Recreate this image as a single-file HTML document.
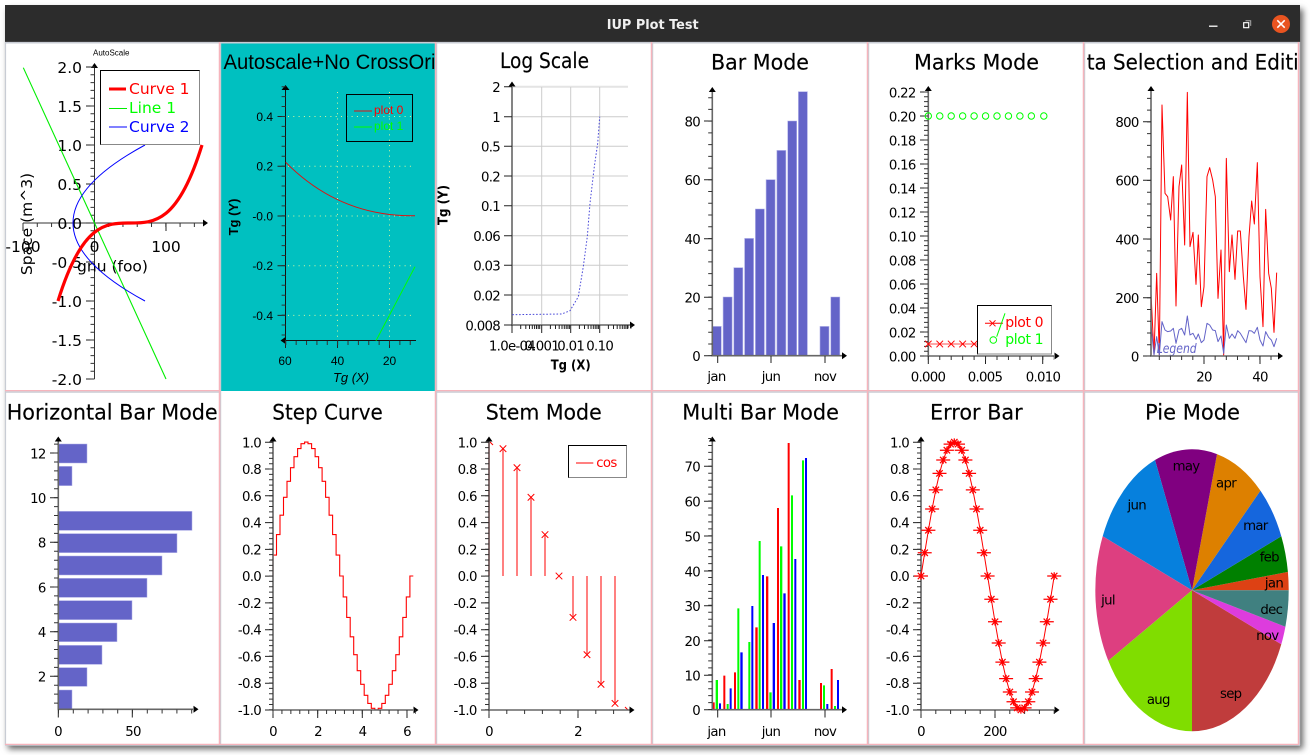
<!DOCTYPE html>
<html><head><meta charset="utf-8"><title>IUP Plot Test</title>
<style>
html,body{margin:0;padding:0;background:#fff;width:1310px;height:755px;overflow:hidden}
#w{position:absolute;left:5px;top:5px;width:1295px;height:740px;background:#fff;box-shadow:3px 4px 6px rgba(0,0,0,.6)}
svg{position:absolute;left:0;top:0}
text{font-family:"DejaVu Sans","Liberation Sans",sans-serif;fill:#000}
.l text,text.l{font-size:13.3px;letter-spacing:-.7px}
.e{text-anchor:end}.m{text-anchor:middle}
.ti{font-size:21.5px;fill:#000;stroke:#000;stroke-width:.15px}
.big text{font-size:15.5px}
.lib text,text.lib{font-family:"Liberation Sans",sans-serif;font-size:12px}
.ax{stroke:#666;stroke-width:1.6;fill:none}
.tk{stroke:#222;stroke-width:1;fill:none}
.mn{stroke:#333;stroke-width:4;fill:none}
.ar{fill:#000;stroke:none}
</style></head><body>
<div id="w"></div>
<svg width="1310" height="755" viewBox="0 0 1310 755" xmlns="http://www.w3.org/2000/svg">
<defs>
<marker id="mx" markerUnits="userSpaceOnUse" markerWidth="10" markerHeight="10" refX="5" refY="5" overflow="visible"><path d="M1.7 1.7L8.3 8.3M8.3 1.7L1.7 8.3" stroke="#f00" fill="none"/></marker>
<marker id="mo" markerUnits="userSpaceOnUse" markerWidth="10" markerHeight="10" refX="5" refY="5" overflow="visible"><circle cx="5" cy="5" r="3.2" stroke="#0f0" fill="none"/></marker>
<marker id="ms" markerUnits="userSpaceOnUse" markerWidth="16" markerHeight="10" refX="8" refY="5" overflow="visible"><path d="M1 5H15M8 1.3V8.7M4.8 1.8L11.2 8.2M11.2 1.8L4.8 8.2" stroke="#f00" stroke-width="1.25" fill="none"/></marker>
<path id="dec" d="M8.7 325v4M13.8 325v4M17.5 325v4M20.3 325v4M22.6 325v4M24.5 325v4M26.2 325v4M27.7 325v4" stroke="#222" fill="none"/>
<path id="ym" d="M0 442.3h8M0 469h8M0 495.8h8M0 522.6h8M0 549.4h8M0 576.1h8M0 602.9h8M0 629.7h8M0 656.4h8M0 683.2h8M0 710h8" stroke="#222" fill="none"/>
</defs>

<!-- title bar -->
<rect x="5" y="5" width="1295" height="37" fill="#2c2c2c"/>
<text x="606.7" y="29" font-size="13" font-weight="bold" textLength="92" lengthAdjust="spacingAndGlyphs" style="fill:#f0f0f0">IUP Plot Test</text>
<path d="M1209 26.2h8.5" stroke="#fff" stroke-width="1.3"/>
<path d="M1243.7 22.7h5v5h-5z" stroke="#fff" stroke-width="1.2" fill="none"/>
<path d="M1245.5 20.7h5.2v5.2" stroke="#aaa" stroke-width="1" fill="none"/>
<circle cx="1281" cy="24" r="9" fill="#e95420"/>
<path d="M1277.3 20.3l7.4 7.4M1284.7 20.3l-7.4 7.4" stroke="#fff" stroke-width="1.5"/>

<!-- cyan cell -->
<rect x="221" y="42" width="214" height="349" fill="#00c0c0"/>

<!-- Plot 1 -->
<text x="93" y="55.5" font-size="8" style="font-family:'Liberation Sans',sans-serif" fill="#222">AutoScale</text>
<path class="ax" style="stroke:#333;stroke-width:1" d="M94.5 68V379M23 223H204"/>
<path class="ar" d="M94.5 63l-3.5 5h7z M208 223l-5 -3.5v7z"/>
<path class="tk" d="M86 67h8M86 106h8M86 145h8M86 184h8M86 223h8M86 262h8M86 301h8M86 340h8M86 379h8M23 223v8M94.5 223v8M166 223v8"/>
<path class="mn" style="stroke-width:4" stroke-dasharray="1 6.8" d="M92.5 66.5V380"/>
<path class="mn" stroke-dasharray="1 13.28" d="M22.5 225H205"/>
<g class="big">
<text class="e" x="82" y="73">2.0</text><text class="e" x="82" y="112">1.5</text><text class="e" x="82" y="151">1.0</text><text class="e" x="82" y="190">0.5</text><text class="e" x="82" y="229">0.0</text><text class="e" x="82" y="268">-0.5</text><text class="e" x="82" y="307">-1.0</text><text class="e" x="82" y="346">-1.5</text><text class="e" x="82" y="385">-2.0</text>
<text class="m" x="23" y="252">-100</text><text class="m" x="94.5" y="252">0</text><text class="m" x="166" y="252">100</text>
<text class="m" x="112.5" y="271.5">gnu (foo)</text>
<text class="m" transform="rotate(-90 32 224)" x="32" y="224">Space (m^3)</text>
</g>
<path d="M23.3 67.7L166 379" stroke="#0e0" fill="none" stroke-width="1.1"/>
<path d="M145 145Q1 223 145 301" stroke="#00f" fill="none" stroke-width="1"/>
<path d="M58 301C106 145 154 301 202 145" stroke="#f00" fill="none" stroke-width="3.2"/>
<rect x="100.5" y="70.5" width="99" height="74" fill="#fff" stroke="#000"/>
<path d="M199.5 70.5V144.5H100.5" stroke="#888" fill="none"/>
<path d="M109 89h17" stroke="#f00" stroke-width="3" /><path d="M109 108.5h18" stroke="#0e0"/><path d="M109 127h18" stroke="#00f"/>
<g class="big"><text x="129" y="94" style="fill:#f00">Curve 1</text><text x="129" y="113" style="fill:#0f0">Line 1</text><text x="129" y="132" style="fill:#00f">Curve 2</text></g>

<!-- Plot 2 -->
<text x="223.5" y="69" font-size="21" textLength="212" lengthAdjust="spacingAndGlyphs" style="font-family:'Liberation Sans',sans-serif">Autoscale+No CrossOri</text>
<path d="M288 116.5H415M288 166.2H415M288 216H415M288 265.7H415M288 315.4H415M337.5 92V340M389.5 92V340" stroke="#d8f5a0" stroke-dasharray="1 4.3" fill="none"/>
<path class="ax" style="stroke:#111;stroke-width:1" d="M285.5 90V340.5H416"/>
<path class="ar" d="M285.5 85l-4 5h8z M280.5 340.5l5 -3.5v7z"/>
<path class="tk" d="M277.5 116.5h8M277.5 166.2h8M277.5 216h8M277.5 265.7h8M277.5 315.4h8M285.5 340v8M337.5 340v8M389.5 340v8"/>
<path class="mn" stroke-dasharray="1 8.93" d="M283.6 86.2V340"/>
<path class="mn" stroke-dasharray="1 9.37" d="M285.3 343H415"/>
<g class="lib">
<text class="e" x="273" y="121">0.4</text><text class="e" x="273" y="170.7">0.2</text><text class="e" x="273" y="220.5">-0.0</text><text class="e" x="273" y="270.2">-0.2</text><text class="e" x="273" y="319.9">-0.4</text>
<text class="m" x="285" y="365">60</text><text class="m" x="337.5" y="365">40</text><text class="m" x="389.5" y="365">20</text>
<text class="m" x="351" y="382" font-style="italic" style="font-size:13px;font-style:italic">Tg (X)</text>
<text class="m" transform="rotate(-90 238 217)" x="238" y="217" style="font-size:13px;font-weight:bold">Tg (Y)</text>
</g>
<path d="M285.7 162.3Q340 217 415 215.7" stroke="#e01010" fill="none" stroke-width="1"/>
<path d="M376 340.7L415 266.7" stroke="#0f0" fill="none"/>
<rect x="346.5" y="94.5" width="66" height="47" fill="none" stroke="#000"/>
<path d="M354 111h18" stroke="#e01010"/><path d="M354 127h18" stroke="#0f0"/>
<g class="lib"><text x="374" y="114" style="fill:#f00">plot 0</text><text x="374" y="130" style="fill:#0f0">plot 1</text></g>

<!-- Plot 3 log -->
<text class="ti" x="500" y="68" textLength="89" lengthAdjust="spacingAndGlyphs">Log Scale</text>
<path d="M512 86.7H628" stroke="#e4e4e4" stroke-width="2"/>
<path d="M512 116.7H628M512 146.3H628M512 176H628M512 205.7H628M512 235.7H628M512 265.3H628M512 295H628M541.7 87V325M570.7 87V325M599.7 87V325" stroke="#ccc" fill="none"/>
<path class="ax" d="M512 87V325H630"/>
<path class="ar" d="M512 81.5l-3.5 5h7z M635 325l-5 -3.5v7z"/>
<path class="tk" d="M504 86.7h8M504 116.7h8M504 146.3h8M504 176h8M504 205.7h8M504 235.7h8M504 265.3h8M504 295h8M504 325h8M512 325v8M541.7 325v8M570.7 325v8M599.7 325v8"/>
<use href="#dec" x="512"/><use href="#dec" x="541.7"/><use href="#dec" x="570.7"/><use href="#dec" x="599.7"/>
<path d="M628 325v3.5M631 325v3.5" stroke="#222"/>
<g class="l">
<text class="e" x="500" y="92">2</text><text class="e" x="500" y="122">1</text><text class="e" x="500" y="151.6">0.5</text><text class="e" x="500" y="181.3">0.2</text><text class="e" x="500" y="211">0.1</text><text class="e" x="500" y="241">0.06</text><text class="e" x="500" y="270.6">0.03</text><text class="e" x="500" y="300.3">0.02</text><text class="e" x="500" y="330.3">0.008</text>
<text class="m" x="512" y="350.7">1.0e-04</text><text class="m" x="541.7" y="350.7">0.001</text><text class="m" x="570.7" y="350.7">0.01</text><text class="m" x="599.7" y="350.7">0.10</text>
</g>
<text x="550.7" y="369.3" font-size="13" font-weight="bold" textLength="40" lengthAdjust="spacingAndGlyphs">Tg (X)</text>
<text transform="rotate(-90 447.5 205)" class="m" x="447.5" y="205" font-size="13" font-weight="bold" textLength="40" lengthAdjust="spacingAndGlyphs">Tg (Y)</text>
<polyline points="512.3,314.7 561.7,314 570,310.7 578.3,296.7 583.3,266.7 587.3,236.7 590,203.3 594.3,166.7 597.7,143.3 599.7,116.7" fill="none" stroke="#4848d8" stroke-width="1" stroke-dasharray="1.6 1.8"/>

<!-- Plot 4 bar -->
<text class="ti" x="711" y="69.7" textLength="98" lengthAdjust="spacingAndGlyphs">Bar Mode</text>
<path fill="#6464c8" stroke="#b0b0e8" stroke-width=".6" d="M712.3 355.7V326.4h9V355.7zM723.1 355.7V297h9V355.7zM733.8 355.7V267.7h9V355.7zM744.6 355.7V238.4h9V355.7zM755.4 355.7V209h9V355.7zM766.1 355.7V179.7h9V355.7zM776.9 355.7V150.4h9V355.7zM787.7 355.7V121h9V355.7zM798.4 355.7V91.7h9V355.7zM820 355.7V326.4h9V355.7zM830.8 355.7V297h9V355.7z"/>
<path class="ax" d="M712.3 92V355.7H842"/>
<path class="ar" d="M712.3 87l-3.5 5h7z M847 355.7l-5 -3.5v7z"/>
<path class="tk" d="M704 121h8M704 179.7h8M704 238.7h8M704 297.3h8M704 355.7h8M717.7 356v7M771 356v7M825 356v7"/>
<path class="mn" stroke-dasharray="1 10.73" d="M710.2 97.2V356"/>
<g class="l">
<text class="e" x="700" y="126.3">80</text><text class="e" x="700" y="185">60</text><text class="e" x="700" y="244">40</text><text class="e" x="700" y="302.6">20</text><text class="e" x="700" y="361">0</text>
<text class="m" x="716.5" y="381">jan</text><text class="m" x="771" y="381">jun</text><text class="m" x="825" y="381">nov</text>
</g>

<!-- Plot 5 marks -->
<text class="ti" x="914" y="69.5" textLength="125" lengthAdjust="spacingAndGlyphs">Marks Mode</text>
<path class="ax" d="M928.3 91V356H1054"/>
<path class="ar" d="M928.3 86l-3.5 5h7z M1059.5 356l-5 -3.5v7z"/>
<path class="tk" d="M920 92h8M920 116h8M920 140h8M920 164h8M920 188h8M920 212h8M920 236h8M920 260h8M920 284h8M920 308h8M920 332h8M920 356h8M928.3 356v8M985.5 356v8M1042.7 356v8"/>
<path class="mn" stroke-dasharray="1 3.8" d="M926 91.5V356.5"/>
<path class="mn" stroke-dasharray="1 10.45" d="M927.8 358H1054"/>
<g class="l">
<text class="e" x="915.7" y="97.3">0.22</text><text class="e" x="915.7" y="121.3">0.20</text><text class="e" x="915.7" y="145.3">0.18</text><text class="e" x="915.7" y="169.3">0.16</text><text class="e" x="915.7" y="193.3">0.14</text><text class="e" x="915.7" y="217.3">0.12</text><text class="e" x="915.7" y="241.3">0.10</text><text class="e" x="915.7" y="265.3">0.08</text><text class="e" x="915.7" y="289.3">0.06</text><text class="e" x="915.7" y="313.3">0.04</text><text class="e" x="915.7" y="337.3">0.02</text><text class="e" x="915.7" y="361.3">0.00</text>
<text class="m" x="928" y="381.5">0.000</text><text class="m" x="985" y="381.5">0.005</text><text class="m" x="1043" y="381.5">0.010</text>
</g>
<polyline points="928.3,116 939.75,116 951.2,116 962.65,116 974.1,116 985.55,116 997,116 1008.45,116 1019.9,116 1031.35,116 1043.8,116" fill="none" stroke="none" marker-start="url(#mo)" marker-mid="url(#mo)" marker-end="url(#mo)"/>
<polyline points="928.3,344 939.75,344 951.2,344 962.65,344 974.1,344 985.55,344" fill="none" stroke="#ff5050" marker-start="url(#mx)" marker-mid="url(#mx)" marker-end="url(#mx)"/>
<rect x="977.5" y="305.5" width="74" height="48.5" fill="#fff" stroke="#000"/>
<path d="M1051.5 305.5V354H977.5" stroke="#888" fill="none"/>
<path d="M985 323.3H1003" stroke="#f00"/><path d="M989.5 320.3l6 6M995.5 320.3l-6 6" stroke="#f00"/>
<path d="M1005 313.3L996.7 336.7" stroke="#0f0"/><circle cx="993.3" cy="340" r="3.3" fill="none" stroke="#0f0"/>
<text x="1005.3" y="327" font-size="14" letter-spacing="-.4" style="fill:#f00">plot 0</text>
<text x="1005.3" y="344" font-size="14" letter-spacing="-.4" style="fill:#0f0">plot 1</text>

<!-- Plot 6 -->
<text class="ti" x="1086.7" y="69.5" textLength="212" lengthAdjust="spacingAndGlyphs">ta Selection and Editi</text>
<g transform="translate(870 0) scale(.33333)" fill="none" stroke-width="3" stroke-linejoin="round">
<polyline stroke="#f00" points="843,880 852,1065 860,820 868,1065 876,315 885,580 893,590 902,660 910,530 918,918 927,560 935,495 944,735 952,277 960,740 969,697 978,853 985,705 994,920 1002,860 1011,530 1019,503 1028,540 1036,590 1044,895 1053,750 1061,1065 1069,475 1078,815 1086,705 1095,838 1103,693 1111,693 1120,830 1128,928 1137,710 1145,603 1153,672 1162,488 1170,830 1179,980 1187,628 1196,820 1204,865 1212,997 1220,818"/>
<polyline stroke="#6464c8" points="843,975 852,1065 860,1010 868,1065 876,965 885,990 893,995 902,993 910,985 918,1030 927,990 935,985 944,1005 952,948 960,1005 969,1000 978,1018 985,1002 994,1028 1002,1020 1011,970 1019,975 1028,990 1036,992 1044,1025 1053,1008 1061,1060 1069,975 1078,1015 1086,1002 1095,1015 1103,992 1111,1000 1120,1015 1128,1028 1137,992 1145,993 1153,1000 1162,982 1170,1020 1179,1038 1187,995 1196,1012 1204,1020 1212,1040 1220,1015"/>
</g>
<text x="1156.7" y="353" font-size="13.5" font-style="italic" textLength="40" lengthAdjust="spacingAndGlyphs" style="fill:#6464c8">Legend</text>
<path class="ax" d="M1151 91V356H1278"/>
<path class="ar" d="M1151 86l-3.5 5h7z M1283 356l-5 -3.5v7z"/>
<path class="tk" d="M1143 121.7h8M1143 180.3h8M1143 239h8M1143 297.7h8M1143 356h8M1204 356v8M1260 356v8"/>
<path class="mn" stroke-dasharray="1 10.73" d="M1149 97.9V356.5"/>
<path class="mn" stroke-dasharray="1 10.17" d="M1158.8 358H1280"/>
<g class="l">
<text class="e" x="1138.7" y="127">800</text><text class="e" x="1138.7" y="185.6">600</text><text class="e" x="1138.7" y="244.3">400</text><text class="e" x="1138.7" y="303">200</text><text class="e" x="1138.7" y="361.3">0</text>
<text class="m" x="1204" y="381.5">20</text><text class="m" x="1260" y="381.5">40</text>
</g>

<!-- Plot 7 H bars -->
<text class="ti" x="6.7" y="419.3" textLength="211" lengthAdjust="spacingAndGlyphs">Horizontal Bar Mode</text>
<g transform="translate(0 390) scale(.33333)">
<path fill="#6464c8" stroke="#b0b0e8" stroke-width="1.6" d="M173 162H261V219H173zM173 229H216V287H173zM173 364H576V421H173zM173 431H531V488H173zM173 498H486V555H173zM173 565H441V622H173zM173 632H396V689H173zM173 699H351V755H173zM173 766H306V823H173zM173 833H261V889H173zM173 900H216V957H173z"/>
</g>
<path class="ax" d="M58.3 441V709.3H193"/>
<path class="ar" d="M58.3 436.5l-3.5 5h7z M198.5 709.3l-5 -3.5v7z"/>
<path class="tk" d="M50 453h8M50 497.7h8M50 542.3h8M50 587h8M50 631.7h8M50 676.3h8M58.3 710v7.5M132.3 710v7.5"/>
<path class="mn" stroke-dasharray="1 7.93" d="M56 443.6V709"/>
<path class="mn" stroke-dasharray="1 13.8" d="M58 711.5H193"/>
<g class="l">
<text class="e" x="45.7" y="458.3">12</text><text class="e" x="45.7" y="503">10</text><text class="e" x="45.7" y="547.6">8</text><text class="e" x="45.7" y="592.3">6</text><text class="e" x="45.7" y="637">4</text><text class="e" x="45.7" y="681.6">2</text>
<text class="m" x="58" y="736">0</text><text class="m" x="133" y="736">50</text>
</g>

<!-- Plot 8 step -->
<text class="ti" x="272.3" y="419.3" textLength="110.5" lengthAdjust="spacingAndGlyphs">Step Curve</text>
<path d="M273 576V555.1H276.5V534.6H280V515.2H283.5V497.3H287V481.3H290.5V467.7H294V456.7H297.6V448.6H301V443.7H304.6V442.1H308V443.7H311.6V448.6H315.1V456.7H318.6V467.7H322.1V481.3H325.6V497.3H329.1V515.2H332.6V534.6H336.1V555.1H339.7V576H343.2V596.9H346.7V617.4H350.2V636.8H353.7V654.7H357.2V670.7H360.7V684.3H364.2V695.3H367.8V703.4H371.3V708.3H374.8V709.9H378.2V708.3H381.8V703.4H385.3V695.3H388.8V684.3H392.3V670.7H395.8V654.7H399.3V636.8H402.8V617.4H406.3V596.9H409.9V576H413.3" fill="none" stroke="#f00" stroke-width="1.1"/>
<path class="ax" d="M273 441V710H413"/>
<path class="ar" d="M273 436.5l-3.5 5h7z M418.5 710l-5 -3.5v7z"/>
<use href="#ym" x="265"/>
<path class="tk" d="M273 710v8M317.7 710v8M362.3 710v8M407 710v8"/>
<path class="mn" stroke-dasharray="1 4.35" d="M271 441.8V710.5"/>
<path class="mn" stroke-dasharray="1 7.93" d="M272.5 712H416"/>
<g class="l" transform="translate(261 0)">
<text class="e" y="447.3">1.0</text><text class="e" y="474">0.8</text><text class="e" y="500.8">0.6</text><text class="e" y="527.6">0.4</text><text class="e" y="554.4">0.2</text><text class="e" y="581.1">0.0</text><text class="e" y="607.9">-0.2</text><text class="e" y="634.7">-0.4</text><text class="e" y="661.4">-0.6</text><text class="e" y="688.2">-0.8</text><text class="e" y="715">-1.0</text>
</g>
<g class="l"><text class="m" x="273" y="736">0</text><text class="m" x="318" y="736">2</text><text class="m" x="362.5" y="736">4</text><text class="m" x="407" y="736">6</text></g>

<!-- Plot 9 stem -->
<text class="ti" x="485.7" y="419.3" textLength="116" lengthAdjust="spacingAndGlyphs">Stem Mode</text>
<path d="M503 576V448.7M517 576V467.7M531 576V497.3M545 576V534.6M573 576V617.4M587 576V654.7M601 576V684.3M615 576V703.4" stroke="#ff8080" stroke-width="2" fill="none"/>
<path d="M489 576V442" stroke="#e84040" stroke-width="1.6"/>
<polyline points="503,448.7 517,467.7 531,497.3 545,534.6 559,576 573,617.4 587,654.7 601,684.3 615,703.4" fill="none" stroke="none" marker-start="url(#mx)" marker-mid="url(#mx)" marker-end="url(#mx)"/>
<path d="M490 442l3 3M625 707l3 3" stroke="#f00"/>
<path class="ax" d="M489 441V710H630"/>
<path class="ar" d="M489 436.5l-3.5 5h7z M634.5 710l-5 -3.5v7z"/>
<use href="#ym" x="481"/>
<path class="tk" d="M489 710v8M578 710v8"/>
<path class="mn" stroke-dasharray="1 4.35" d="M487 441.8V710.5"/>
<path class="mn" stroke-dasharray="1 16.8" d="M488.5 712H630"/>
<g class="l" transform="translate(476.7 0)">
<text class="e" y="447.3">1.0</text><text class="e" y="474">0.8</text><text class="e" y="500.8">0.6</text><text class="e" y="527.6">0.4</text><text class="e" y="554.4">0.2</text><text class="e" y="581.1">0.0</text><text class="e" y="607.9">-0.2</text><text class="e" y="634.7">-0.4</text><text class="e" y="661.4">-0.6</text><text class="e" y="688.2">-0.8</text><text class="e" y="715">-1.0</text>
</g>
<g class="l"><text class="m" x="489" y="736">0</text><text class="m" x="578" y="736">2</text></g>
<rect x="568.5" y="445.5" width="58" height="32" fill="#fff" stroke="#000"/>
<path d="M626.5 445.5V477.5H568.5" stroke="#888" fill="none"/>
<path d="M576 463h17.3" stroke="#f00"/>
<text x="596.3" y="467" class="l" style="fill:#f00">cos</text>

<!-- Plot 10 multibar -->
<text class="ti" x="682.3" y="419.3" textLength="156.7" lengthAdjust="spacingAndGlyphs">Multi Bar Mode</text>
<g transform="translate(435 390) scale(.33333)">
<path fill="#f00" d="M832 937h7V959h-7zM865 857h6V959h-6zM897 847h6V959h-6zM961 712h7V959h-7zM993 559h7V959h-7zM1026 354h6V959h-6zM1058 159h6V959h-6zM1090 870h7V959h-7zM1155 879h6V959h-6zM1187 837h6V959h-6z"/>
<path fill="#0f0" d="M842 870h7V959h-7zM875 942h6V959h-6zM907 655h6V959h-6zM940 756h6V959h-6zM971 453h6V959h-6zM1003 907h7V959h-7zM1035 469h7V959h-7zM1068 316h6V959h-6zM1101 211h6V959h-6zM1164 886h6V959h-6zM1197 948h6V959h-6z"/>
<path fill="#00f" d="M852 940h6V959h-6zM884 895h6V959h-6zM916 787h7V959h-7zM949 648h6V959h-6zM981 555h6V959h-6zM1013 699h7V959h-7zM1045 610h7V959h-7zM1078 507h6V959h-6zM1110 204h6V959h-6zM1174 942h6V959h-6zM1206 870h6V959h-6z"/>
</g>
<path class="ax" d="M712.3 441V709.7H842"/>
<path class="ar" d="M712.3 436.5l-3.5 5h7z M847 709.7l-5 -3.5v7z"/>
<path class="tk" d="M704 466.3h8M704 501.3h8M704 536h8M704 571h8M704 605.7h8M704 640.7h8M704 675.3h8M704 709.7h8M717.7 710v7.5M771 710v7.5M825 710v7.5"/>
<path class="mn" stroke-dasharray="1 5.95" d="M710.2 438V710"/>
<g class="l">
<text class="e" x="700" y="471.6">70</text><text class="e" x="700" y="506.6">60</text><text class="e" x="700" y="541.3">50</text><text class="e" x="700" y="576.3">40</text><text class="e" x="700" y="611">30</text><text class="e" x="700" y="646">20</text><text class="e" x="700" y="680.6">10</text><text class="e" x="700" y="715">0</text>
<text class="m" x="716.5" y="736">jan</text><text class="m" x="771" y="736">jun</text><text class="m" x="825" y="736">nov</text>
</g>

<!-- Plot 11 error bar -->
<text class="ti" x="930" y="419.3" textLength="92.7" lengthAdjust="spacingAndGlyphs">Error Bar</text>
<path class="ax" d="M921 441V710H1054"/>
<path class="ar" d="M921 436.5l-3.5 5h7z M1059.5 710l-5 -3.5v7z"/>
<use href="#ym" x="913"/>
<path class="tk" d="M921 710v8M995 710v8"/>
<path class="mn" stroke-dasharray="1 4.35" d="M919 441.8V710.5"/>
<path class="mn" stroke-dasharray="1 13.8" d="M920.5 712H1055"/>
<polyline points="921,576 924.7,552.8 928.4,530.2 932.1,509 935.8,489.9 939.5,473.4 943.2,460 946.9,450.2 950.6,444.1 954.3,442.1 958,444.1 961.7,450.2 965.4,460 969.1,473.4 972.8,489.9 976.5,509 980.2,530.2 983.9,552.8 987.6,576 991.3,599.2 995,621.8 998.7,643 1002.4,662.1 1006.1,678.6 1009.8,692 1013.5,701.8 1017.2,707.9 1020.9,709.9 1024.6,707.9 1028.3,701.8 1032,692 1035.7,678.6 1039.4,662.1 1043.1,643 1046.8,621.8 1050.5,599.2 1054.2,576" fill="none" stroke="#f00" stroke-width="1" marker-start="url(#ms)" marker-mid="url(#ms)" marker-end="url(#ms)"/>
<g class="l" transform="translate(909 0)">
<text class="e" y="447.3">1.0</text><text class="e" y="474">0.8</text><text class="e" y="500.8">0.6</text><text class="e" y="527.6">0.4</text><text class="e" y="554.4">0.2</text><text class="e" y="581.1">0.0</text><text class="e" y="607.9">-0.2</text><text class="e" y="634.7">-0.4</text><text class="e" y="661.4">-0.6</text><text class="e" y="688.2">-0.8</text><text class="e" y="715">-1.0</text>
</g>
<g class="l"><text class="m" x="921" y="736">0</text><text class="m" x="995" y="736">200</text></g>

<!-- Plot 12 pie -->
<text class="ti" x="1145" y="419.3" textLength="95" lengthAdjust="spacingAndGlyphs">Pie Mode</text>
<g stroke-width=".3">
<path fill="#dd4114" d="M1192 590.3L1288.7 590.3A96.7 141 0 0 0 1287.9 571.9Z"/>
<path fill="#008000" d="M1192 590.3L1287.9 571.9A96.7 141 0 0 0 1281.3 536.3Z"/>
<path fill="#1566dd" d="M1192 590.3L1281.3 536.3A96.7 141 0 0 0 1260.4 490.6Z"/>
<path fill="#dd8000" d="M1192 590.3L1260.4 490.6A96.7 141 0 0 0 1217 454.1Z"/>
<path fill="#800080" d="M1192 590.3L1217 454.1A96.7 141 0 0 0 1155 460Z"/>
<path fill="#0680dd" d="M1192 590.3L1155 460A96.7 141 0 0 0 1102.7 536.3Z"/>
<path fill="#dd3f80" d="M1192 590.3L1102.7 536.3A96.7 141 0 0 0 1108.3 660.8Z"/>
<path fill="#80dd00" d="M1192 590.3L1108.3 660.8A96.7 141 0 0 0 1192 731.3Z"/>
<path fill="#c03c3c" d="M1192 590.3L1192 731.3A96.7 141 0 0 0 1281.3 644.3Z"/>
<path fill="#dd3cdd" d="M1192 590.3L1281.3 644.3A96.7 141 0 0 0 1285.4 626.8Z"/>
<path fill="#408080" d="M1192 590.3L1285.4 626.8A96.7 141 0 0 0 1288.7 590.3Z"/>
</g>
<g class="l" style="fill:#111">
<text class="m" x="1186" y="470.5">may</text><text class="m" x="1226" y="487.5">apr</text><text class="m" x="1255.3" y="530">mar</text><text class="m" x="1269.3" y="561.5">feb</text><text class="m" x="1274" y="587.5">jan</text><text class="m" x="1271.3" y="614">dec</text><text class="m" x="1267.3" y="640">nov</text><text class="m" x="1230.7" y="698">sep</text><text class="m" x="1158.3" y="704">aug</text><text class="m" x="1108" y="604.5">jul</text><text class="m" x="1136.7" y="509.5">jun</text>
</g>

<!-- separators -->
<g fill="none">
<path stroke="#c8ccd4" stroke-width="1.2" d="M5.5 42V745M220.6 42V745M436.6 42V745M652.6 42V745M868.6 42V745M1084.6 42V745M1299.6 42V745"/>
<path stroke="#c8ccd4" stroke-width="1.6" d="M5 42.7H1300M5 392H221M435 392H1300M5 745H1300"/>
<path stroke="#f6b4bc" stroke-width="1.5" d="M219.5 42V745M435.5 42V745M651.5 42V745M867.5 42V745M1083.5 42V745M1298.5 42V745"/>
<path stroke="#f6b4bc" stroke-width="1.2" d="M5 390.6H221M435 390.6H1300M5 744.4H1299"/>
</g>
</svg>
</body></html>
